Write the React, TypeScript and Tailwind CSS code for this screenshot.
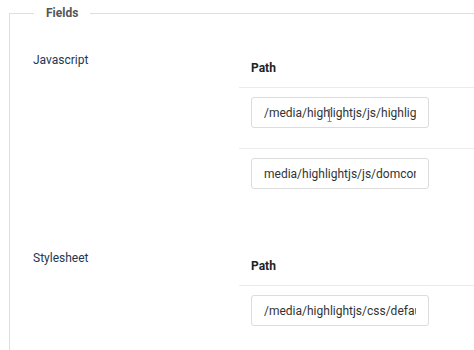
import React from 'react';

const font = { fontFamily: 'Roboto, "Liberation Sans", sans-serif' };

const PathInput = ({ value, cursor }: { value: string; cursor?: boolean }) => (
  <div className="relative w-[178px]">
    <input
      readOnly
      value={value}
      className="block h-[31px] w-[178px] rounded-[3px] border border-[#dcdcdc] bg-white px-3 text-[12px] text-[#333] outline-none"
      style={font}
    />
    {cursor && (
      <svg className="absolute left-[76px] top-[12px]" width="5" height="13" viewBox="0 0 5 13">
        <path d="M0.5 0.5h4M2.5 0.5v12M0.5 12.5h4" stroke="#888" strokeWidth="1" fill="none" />
      </svg>
    )}
  </div>
);

const Section = ({ label, values }: { label: string; values: string[] }) => (
  <div className="flex">
    <div className="w-[206px] shrink-0 pt-[1px] text-[12px] leading-4 text-[#24364f]">{label}</div>
    <div className="flex-1">
      <div className="border-b border-[#ececec] pb-[11px] pl-3 pt-[9px] text-[12px] font-bold leading-4 text-[#222]">Path</div>
      {values.map((v, i) => (
        <div
          key={i}
          className={`pl-3 pt-[9px] ${i < values.length - 1 ? 'border-b border-[#ececec] pb-[20px]' : ''}`}
        >
          <PathInput value={v} cursor={i === 0 && label === 'Javascript'} />
        </div>
      ))}
    </div>
  </div>
);

export default function App() {
  return (
    <div className="h-[350px] w-[474px] overflow-hidden bg-white" style={font}>
      <fieldset className="ml-[9px] mt-[5px] w-[560px] border border-[#dedede] pb-[80px] pl-[23px] pt-[30px]">
        <legend className="ml-[1px] px-3 text-[12px] font-bold leading-4 text-[#555]">Fields</legend>
        <div className="flex flex-col gap-[60px]">
          <Section
            label="Javascript"
            values={['/media/highlightjs/js/highlight.pack.js', 'media/highlightjs/js/domcontentloaded.js']}
          />
          <Section label="Stylesheet" values={['/media/highlightjs/css/default.css']} />
        </div>
      </fieldset>
    </div>
  );
}
